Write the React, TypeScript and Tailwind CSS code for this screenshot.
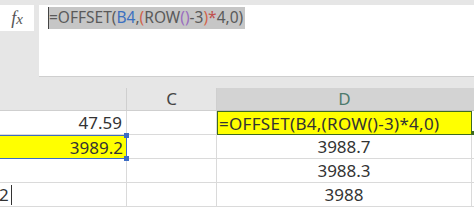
import React from "react";

const font = { fontFamily: '"Noto Sans", "Open Sans", sans-serif' };

function Cell({
  children,
  className = "",
}: {
  children?: React.ReactNode;
  className?: string;
}) {
  return (
    <div
      className={
        "h-[24px] border-b border-r border-[#dadada] flex items-center text-[17px] text-[#333] leading-none " +
        className
      }
    >
      {children}
    </div>
  );
}

export default function App() {
  return (
    <div
      className="w-[474px] h-[207px] bg-[#e6e6e6] overflow-hidden flex flex-col"
      style={font}
    >
      {/* formula bar */}
      <div className="flex gap-[5px] pt-[5px]">
        <div className="w-[34px] h-[26px] bg-white flex items-center justify-center">
          <span
            className="text-[18px] text-[#555] italic"
            style={{ fontFamily: '"Liberation Serif", serif' }}
          >
            f<span className="text-[15px]">x</span>
          </span>
        </div>
        <div className="flex-1 h-[72px] bg-white border-b border-[#cfcfcf] pt-[2px]">
          <div className="flex items-start h-[22px]">
            <div className="w-[9px]" />
            <div className="w-[1px] h-[22px] bg-[#444]" />
            <div className="h-[22px] bg-[#c6c6c6] flex items-center pr-[2px] text-[15.5px] text-[#5a5a5a]">
              <span>=OFFSET(</span>
              <span className="text-[#3b6fc0]">B4</span>
              <span>,</span>
              <span className="text-[#d2634a]">(</span>
              <span>ROW</span>
              <span className="text-[#9a6cc0]">()</span>
              <span>-3</span>
              <span className="text-[#d2634a]">)</span>
              <span className="text-[#c0504d]">*</span>
              <span>4,0)</span>
            </div>
          </div>
        </div>
      </div>

      {/* grid */}
      <div className="mt-[11px] grid grid-cols-[127px_90px_255px_2px]">
        {/* header */}
        <div className="h-[23px] bg-[#e6e6e6] border-r border-b border-[#cfcfcf]" />
        <div className="h-[23px] bg-[#e6e6e6] border-r border-b border-[#cfcfcf] flex items-center justify-center text-[17px] text-[#444]">
          C
        </div>
        <div className="h-[23px] bg-[#d3d3d3] border-b border-[#bdbdbd] flex items-center justify-center text-[17px] text-[#4d7a6c]">
          D
        </div>
        <div className="h-[23px] bg-[#d3d3d3] border-b border-[#bdbdbd]" />

        {/* row 1 */}
        <Cell className="bg-white justify-end pr-[4px]">47.59</Cell>
        <Cell className="bg-white" />
        <div className="relative h-[24px] bg-[#ffff00] border-[1.5px] border-[#3f6b1f] flex items-center text-[17px] text-[#333] leading-none pl-[1px] whitespace-nowrap tracking-[0.3px]">
          =OFFSET(B4,(ROW()-3)*4,0)
        </div>
        <div className="relative h-[24px] bg-white border-b border-[#dadada]">
          <div className="absolute left-0 bottom-[-1px] w-[3px] h-[4px] bg-[#3f6b1f]" />
        </div>

        {/* row 2 */}
        <div className="relative h-[24px] bg-[#ffff00] border-y border-r border-[#3c6cc4] flex items-center justify-end pr-[3px] text-[17px] text-[#333] leading-none">
          3989.2
          <div className="absolute right-[-3px] top-[-3px] w-[5px] h-[5px] bg-[#3c6cc4]" />
          <div className="absolute right-[-3px] bottom-[-3px] w-[5px] h-[5px] bg-[#3c6cc4]" />
        </div>
        <Cell className="bg-white" />
        <Cell className="bg-white justify-center">3988.7</Cell>
        <Cell className="bg-white border-r-0" />

        {/* row 3 */}
        <Cell className="bg-white" />
        <Cell className="bg-white" />
        <Cell className="bg-white justify-center">3988.3</Cell>
        <Cell className="bg-white border-r-0" />

        {/* row 4 */}
        <Cell className="bg-white">
          <span className="-ml-[1px]">2</span>
          <span className="ml-[2px] w-[1px] h-[20px] bg-[#333]" />
        </Cell>
        <Cell className="bg-white" />
        <Cell className="bg-white justify-center">3988</Cell>
        <Cell className="bg-white border-r-0" />
      </div>
    </div>
  );
}
